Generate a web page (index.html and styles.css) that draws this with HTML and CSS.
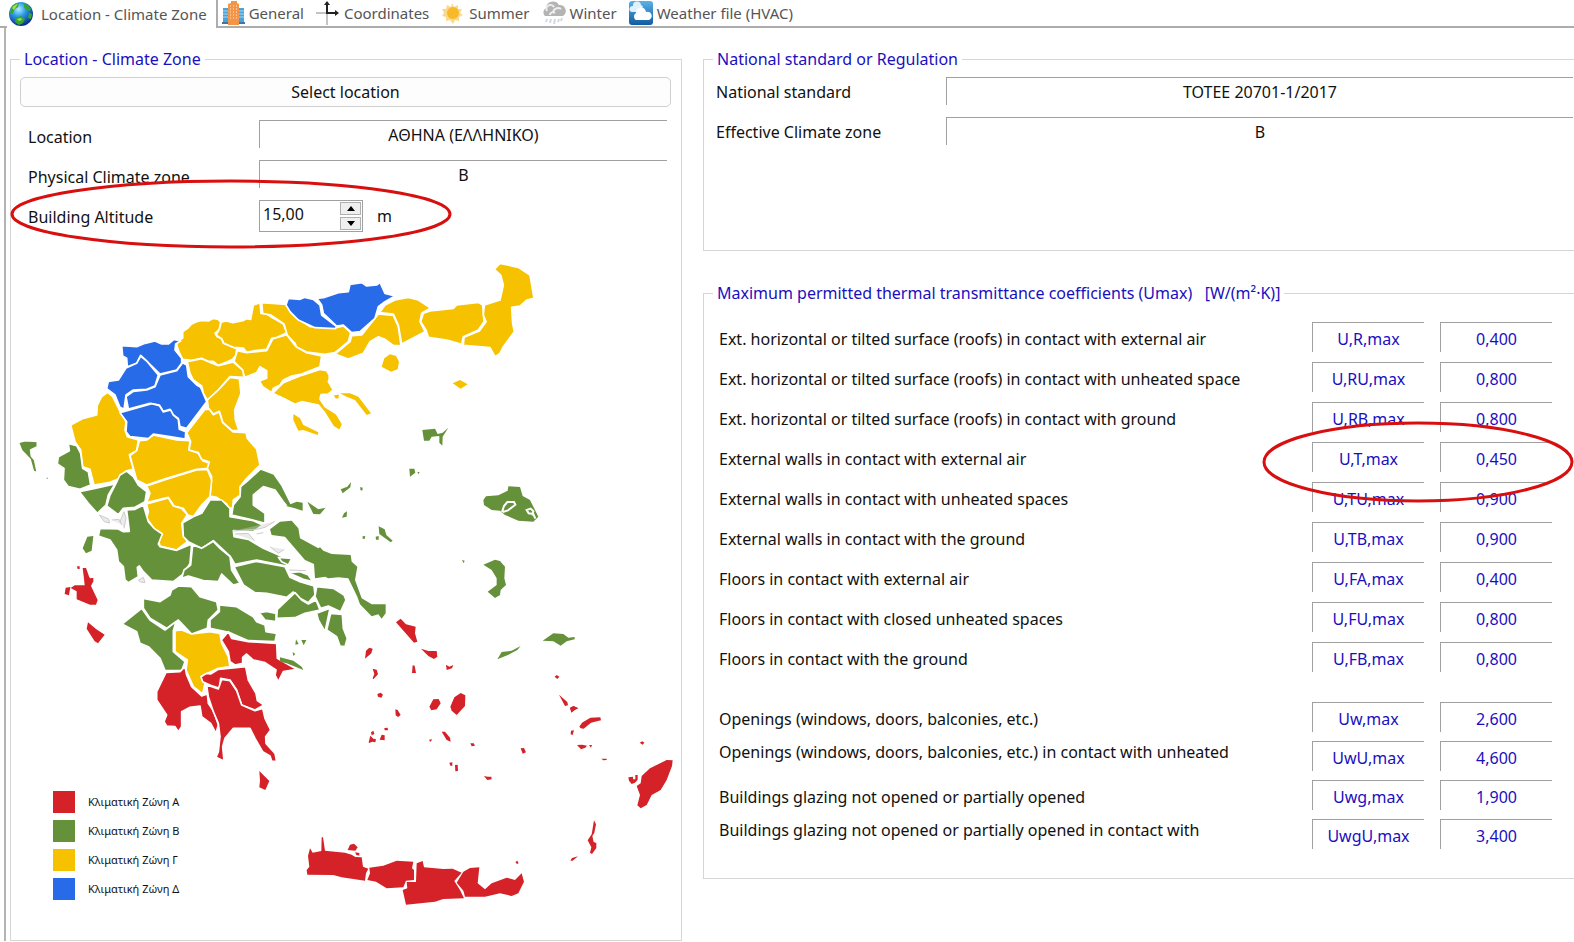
FILE: index.html
```html
<!DOCTYPE html>
<html lang="en">
<head>
<meta charset="utf-8">
<title>Location - Climate Zone</title>
<link rel="stylesheet" href="styles.css">
</head>
<body>
<nav class="tabs" role="tablist">
  <button class="tab tab-active" role="tab" aria-selected="true">
    <svg class="icon" viewBox="0 0 24 24"><defs><radialGradient id="sea" cx=".4" cy=".3" r=".75"><stop offset="0" stop-color="#b5ecff"/><stop offset=".4" stop-color="#2b9be6"/><stop offset="1" stop-color="#06207c"/></radialGradient></defs><circle cx="12" cy="12" r="12" fill="url(#sea)"/><path d="M2 6C4 2 7 1 10 1l-1 4-3 2-2 4-3 1zM15 2l4 1 3 4-1 2-4-1-2-3zM7 16l5-2 4 3-2 4-4 2-4-3zM20 11l3 1-1 5-3-1z" fill="#37a534"/><path d="M3 6c2-3 4-4 6-4l-2 3-2 3zM8 17l4-1 1 2-3 1z" fill="#9fdc57"/></svg>
    Location - Climate Zone</button>
  <button class="tab" role="tab">
    <svg class="icon" viewBox="0 0 24 24"><path d="M2 7h5v15H2zM18 7h5v15h-5z" fill="#4ba3d8"/><path d="M2 10h5M2 13h5M2 16h5M18 10h5M18 13h5M18 16h5" stroke="#a5d7f1"/><path d="M7 3l3-1V0h6v2l2 1v21H7z" fill="#f39548"/><path d="M9.500 4v15M12.500 4v15M15.500 4v15" stroke="#f9c08d" stroke-dasharray="2 1"/><path d="M1 21h6v2H1zM18 21h6v2h-6z" fill="#3478ad"/></svg>
    General</button>
  <button class="tab" role="tab">
    <svg class="icon" viewBox="0 0 24 24"><path d="M0 12h11M11 12v12" stroke="#c4c4c4" stroke-width="2"/><path d="M11 2v10h10" fill="none" stroke="#222" stroke-width="2"/><path d="M8 4l3-4 3 4zM19 9l4 3-4 3z" fill="#222"/></svg>
    Coordinates</button>
  <button class="tab" role="tab">
    <svg class="icon" viewBox="0 0 24 24"><path d="M11 2l2 4 4-2 0 4 4 0-2 4 3 2-4 2 0 4-4-1-2 4-3-4-4 1 0-4-4-1 2-3-2-4 4 0 1-4 4 2z" fill="#fbd98b"/><circle cx="12" cy="12" r="6" fill="#f8b928"/></svg>
    Summer</button>
  <button class="tab" role="tab">
    <svg class="icon" viewBox="0 0 24 24"><path d="M3 15a5 5 0 0 1 1-8 7 7 0 0 1 13-3 6 6 0 0 1 4 11z" fill="#b4b4b4"/><path d="M5 10a4 4 0 0 1 7-4M11 12a5 5 0 0 1 8-4M8 14a3 3 0 0 1 5-2" fill="none" stroke="#eee" stroke-width="2"/><path d="M5 18l-1 3M9 18l-1 4M13 18l-1 5M17 18l-1 3M20 17l-1 3" stroke="#d0d8e2" stroke-width="2"/></svg>
    Winter</button>
  <button class="tab" role="tab">
    <svg class="icon" viewBox="0 0 24 24"><defs><linearGradient id="sky" x2="0" y2="1"><stop offset="0" stop-color="#5ab2e8"/><stop offset="1" stop-color="#115a9f"/></linearGradient></defs><rect width="24" height="24" rx="3" fill="url(#sky)"/><path d="M3 11a3 3 0 0 1 1-6 4 4 0 0 1 8-1 3 3 0 0 1 2 2l-5 5z" fill="#dff1fc"/><path d="M7 19a4 4 0 0 1 0-7 5 5 0 0 1 10-1 4 4 0 0 1 3 8z" fill="#fff"/></svg>
    Weather file (HVAC)</button>
</nav>

<main class="page">
  <fieldset class="group">
    <legend>Location - Climate Zone</legend>
    <div class="location">
      <button class="select-button">Select location</button>
      <div class="form">
        <label for="loc">Location</label><input class="field" id="loc" readonly value="ΑΘΗΝΑ (ΕΛΛΗΝΙΚΟ)">
        <label for="pcz">Physical Climate zone</label><input class="field" id="pcz" readonly value="Β">
        <label for="alt">Building Altitude</label>
        <div class="altitude">
          <span class="spin"><input id="alt" value="15,00"><span class="arrows"><button aria-label="Increase"><svg viewBox="0 0 8 5"><path d="M0 5l4-5 4 5z"/></svg></button><button aria-label="Decrease"><svg viewBox="0 0 8 5"><path d="M0 0l4 5 4-5z"/></svg></button></span></span>
          <span>m</span>
        </div>
        <svg class="mark mark-altitude" viewBox="0 0 442 70"><ellipse cx="221" cy="35" rx="219" ry="33"/></svg>
      </div>
    </div>
    <div class="map-area">
      <svg class="map" viewBox="33 750 2010 2055" role="img" aria-label="Climate zones of Greece">
        <g class="region" transform="translate(0 750)">
          <g class="zone-c">
            <path d="M530 285L535 272 548 264 548 245 562 236 575 222 590 215 605 211 625 213 640 205 655 208 662 216 658 238 645 250 652 260 665 266 670 280 690 288 710 296 708 315 698 328 680 336 655 346 640 334 625 334 605 325 575 331 548 328 538 308Z"/>
            <path d="M664 216L680 213 698 218 728 212 740 206 752 208 760 165 780 158 783 190 800 192 812 200 830 210 850 222 860 248 832 262 815 265 800 298 765 302 740 307 730 294 700 292 672 280 665 266 648 255 658 238Z"/>
            <path d="M785 158L860 163 870 185 890 205 930 230 1005 234 1030 228 1052 248 1045 275 1005 308 975 313 920 306 890 292 885 280 862 256 852 222 830 207 812 195 788 190Z"/>
            <path d="M712 302L740 308 800 302 818 267 860 254 888 290 920 308 965 318 960 350 905 372 875 378 850 390 840 405 820 415 815 428 788 410 778 393 800 385 800 362 780 350 770 368 735 382 725 358 702 334Z"/>
            <path d="M818 430L850 398 905 376 960 358 980 362 990 380 985 395 1000 420 985 432 963 434 960 447 975 470 1010 492 1028 522 1020 542 1000 530 975 490 955 465 905 455 885 463 850 445Z"/>
            <path d="M562 335L605 326 625 335 655 347 700 336 728 360 732 382 690 380 655 420 622 450 610 430 605 408 580 390 570 370Z"/>
            <path d="M690 382L718 386 723 430 704 480 706 510 717 542 695 542 668 516 658 484 640 492 625 475 622 450 655 420Z"/>
            <path d="M212 525L250 505 290 495 292 465 305 440 323 427 338 440 358 480 378 515 375 540 382 560 415 570 410 602 388 614 400 657 378 663 360 685 330 697 282 705 270 658 248 650 242 600 225 575Z"/>
            <path d="M418 572L440 570 460 555 530 570 570 572 567 600 595 610 608 632 628 640 625 655 590 658 500 685 440 705 410 690 390 617 410 602Z"/>
            <path d="M560 548L615 478 628 478 640 494 658 486 668 518 700 546 738 548 742 565 770 597 780 645 740 685 720 710 722 735 700 750 698 772 688 778 680 762 650 742 630 738 635 680 622 655 628 636 605 628 595 608 567 600 572 575Z"/>
            <path d="M440 708L500 688 590 660 622 658 635 690 630 740 605 765 580 800 563 795 550 775 522 768 505 742 440 758 450 730Z"/>
            <path d="M440 762L505 744 520 768 545 775 562 794 545 820 550 855 562 875 530 900 480 888 475 868 487 852 462 835 440 805 445 785Z"/>
          </g>
          <g class="zone-d">
            <path d="M365 287L410 290 435 280 465 273 485 282 505 282 522 268 542 273 527 282 525 300 545 325 545 340 530 360 480 372 440 333 422 316 410 340 382 350 380 325 368 318Z"/>
            <path d="M378 354L410 340 422 318 440 333 475 375 465 408 440 418 400 420 378 435 372 478 360 472 345 435 320 416 325 394 355 390Z"/>
            <path d="M480 375L530 362 548 338 560 345 565 380 590 405 602 412 620 455 560 535 540 530 535 505 515 492 510 478 490 484 478 465 450 460 385 477 378 440 400 424 440 420 465 410Z"/>
            <path d="M360 488L400 477 455 461 478 467 490 486 512 480 520 495 535 508 538 538 557 545 556 567 500 558 460 552 445 566 390 560 378 545 380 515Z"/>
          </g>
          <g class="zone-b">
            <path d="M205 580L230 587 242 610 248 655 265 665 272 705 240 718 205 710 190 690 192 655 172 642 175 620 208 602Z"/>
            <path d="M55 577L75 572 112 574 112 590 92 600 94 618 104 630 112 668 100 664 90 628 65 602ZM133 680l12 1 2 8-8-1zM987 381l16 0 0 3-14 1z"/>
          </g>
        </g>
        <g class="region" transform="translate(0 1410)">
          <g class="zone-b">
            <path d="M238 65L285 55 345 42 325 75 318 105 292 130 265 100Z"/>
            <path d="M348 40L360 15 380 3 400 20 415 45 440 65 435 95 405 112 370 115 355 134 320 108 330 75Z"/>
            <path d="M380 120L405 118 430 105 445 155 462 175 487 192 475 222 480 230 530 241 575 222 570 280 550 312 520 335 455 330 430 305 418 288 412 292 415 320 385 338 375 330 370 290 355 275 350 240 330 210 295 198 300 175 355 177 370 185 388 184Z"/>
            <path d="M548 158L580 140 605 130 630 90 665 90 690 115 690 140 760 152 788 165 760 185 700 182 702 200 745 208 790 235 870 270 860 288 770 270 705 283 690 258 640 212 605 235 565 215 550 200Z"/>
            <path d="M578 225L605 235 640 214 660 235 690 260 695 300 720 340 700 345 665 312 655 335 610 332 565 318 545 325 552 300 572 285Z"/>
            <path d="M702 290L770 274 855 290 870 322 900 335 942 348 945 375 925 398 900 385 880 366 860 382 800 370 765 368 730 345Z"/>
            <path d="M866 308L900 305 925 315 938 335 910 328ZM835 262L875 265 865 285 845 275Z"/>
            <path d="M832 418L862 390 885 368 905 390 925 402 948 390 960 420 915 430 885 443 830 445ZM778 428L800 424 828 430 828 455 795 450Z"/>
            <path d="M950 350L1000 355 1032 375 1038 390 1022 425 985 408 962 415 945 380Z"/>
            <path d="M950 430L990 415 975 485 955 450ZM992 430L1027 433 1030 475 1042 505 1035 530 1020 528 1010 500 980 480Z"/>
            <path d="M782-3L822 12 845 45 875 105 865 113 850 95 825 60 790 50 760 75 760 105 795 130 795 160 750 148 695 135 700 105 720 80 722 50 740 35Z"/>
            <path d="M430 385L480 395 510 375 515 360 535 348 575 350 600 380 650 395 655 420 625 450 622 475 575 492 535 450 500 475 450 445 430 415Z"/>
            <path d="M366 462L425 415 450 450 495 480 528 455 520 482 520 545 555 575 545 602 495 602 480 565 445 530 420 520 410 485Z"/>
            <path d="M658 405L710 410 760 440 770 455 795 465 798 485 830 490 825 515 745 512 690 488 630 475 630 450 658 425Z"/>
          </g>
          <g class="zone-c"><path d="M525 482L545 480 575 492 630 485 660 490 665 520 685 560 690 590 655 595 605 618 615 640 608 672 580 650 558 600 562 570 525 545Z"/></g>
          <g class="zone-a">
            <path d="M664 510L685 485 695 505 745 515 830 520 832 565 890 598 850 605 835 635 825 615 828 600 795 578 760 570 740 552 728 562 728 580 705 585 690 575 685 545Z"/>
            <path d="M603 620L620 610 632 612 655 598 737 590 745 630 768 670 772 692 792 705 765 720 725 705 710 660 690 630 662 625 658 655 630 645 608 635Z"/>
            <path d="M498 607L540 605 555 590 560 615 575 650 605 678 622 672 625 700 642 725 655 765 648 790 632 760 605 740 600 708 570 712 545 725 545 770 535 785 525 770 500 768 492 755 500 735 470 690 470 665Z"/>
            <path d="M620 645L655 657 665 628 690 632 710 662 725 705 765 722 788 715 795 745 812 780 797 800 798 820 825 850 830 875 815 873 810 858 788 845 765 805 750 775 700 775 675 805 668 830 672 873 648 862 655 845 660 800 655 760 640 725 625 680Z"/>
          </g>
        </g>
        <g class="zone-b" transform="translate(0 1410)"><path d="M262 200L280 198 275 242 258 250 248 235ZM888 508l8 14-10 2zM904 510l15 0-8 16zM878 546l8 6-6 6zM840 562L880 572 905 590 910 600 860 580 840 575Z"/></g>
        <g class="zone-a" transform="translate(0 1410)">
          <path d="M248 294l10 0 10 28 12 12-7 14 20 42-5 14-18 0-40-16 0-24-18-10 12-8 30 0-2-20zM197 353l14-2-4 25-13-4zM231 289l8 0 0 8-6 0zM272 324l8 0 0 12-6 0zM264 457l24 20 26 17-20 26-10-6-24-38zM778 903l30 30-12 27-18-8 2-20z"/>
        </g>
        <g class="shoals" transform="translate(0 1410)"><path d="M298 135l28 12 3 12-16-4zM335 150l22-2 8 16M360 155l12-30 6 20-6 30M700 183l40-3 35-3 20-5 30-18M705 192l40-2 18 22M810 230l25 20 18-12M415 330l15-8 5 16-14-2zM770 192l20-4M868 300l50 2"/></g>
        <g class="region" transform="translate(810 750)">
          <g class="zone-c">
            <path d="M195 312L240 275 245 257 275 255 325 192 370 196 385 230 393 287 370 286 345 268 325 260 300 275 280 310 235 327Z"/>
            <path d="M328 188L345 165 375 150 415 142 445 150 482 174 455 190 450 215 465 245 395 282 385 225 370 192Z"/>
            <path d="M460 190L480 183 550 175 560 165 625 157 638 165 642 215 625 240 580 260 575 283 530 270 475 262 468 240 452 215Z"/>
            <path d="M643 165L690 150 700 105 692 75 673 58 690 40 745 52 780 75 792 145 770 150 750 168 725 172 728 220 733 245 700 290 690 310 675 320 660 293 580 286 582 262 628 243 648 215 640 195Z"/>
          </g>
          <g class="zone-d">
            <path d="M48 165L55 145 90 148 105 142 130 148 150 165 155 195 200 230 195 236 135 233 85 210 60 185Z"/>
            <path d="M141 145L165 142 205 128 235 125 240 103 275 98 290 108 320 105 330 97 345 130 375 138 345 155 325 170 315 205 270 245 245 248 220 225 200 228 160 190 155 165Z"/>
          </g>
        </g>
        <g class="zone-c" transform="translate(810 750)"><path d="M335 350L343 325 360 313 378 318 387 335 383 358 363 365ZM548 400L570 390 593 403 572 416ZM210 430L240 430 265 440 280 460 303 490 290 495 255 450 230 440ZM192 436L207 434 205 446 196 445ZM70 492L90 505 100 525 145 547 143 555 100 540 85 542 70 510Z"/></g>
        <g class="zone-b" transform="translate(810 750)"><path d="M457 540L495 536 503 552 518 548 535 533 518 560 517 587 508 578 508 558 485 560 478 572 462 572ZM418 656L433 656 436 668 420 680ZM442 665l7 2-4 6z"/></g>
        <g class="zone-b" transform="translate(810 1410)">
          <path d="M0 178L30 155 65 152 85 175 90 205 145 235 150 232 160 242 185 252 242 255 245 275 262 290 255 330 275 385 305 403 347 403 347 430 335 446 325 433 305 439 270 403 262 380 235 325 205 322 175 325 165 320 135 325 132 282 105 270 45 200 5 195Z"/>
          <path d="M48 108L80 95 98 98 98 122 72 114ZM112 95L145 118 167 113 150 133 130 132ZM212 58L232 50 243 36 241 52 218 70ZM271 51l7 2-1 9-6-2zM216 143L222 130 231 124 230 140ZM326 169L344 178 349 195 368 212 362 217 328 192ZM317 200l9-2 0 11-8 0zM278 198l8 1-2 8-6-1zM576 270l8 2-3 8z"/>
          <path d="M640 90L648 79 685 76 713 62 715 49 750 51 758 78 780 90 805 140 790 155 745 152 705 135 690 122 665 120 642 105ZM640 284L675 269 690 273 705 290 703 325 708 345 692 360 690 375 675 384 653 365 680 345 680 325 665 300ZM818 512L850 490 880 492 895 503 914 501 914 508 890 514 872 527 850 514ZM682 568L695 546 725 542 752 528 742 540 712 556Z"/>
          <path class="bay" d="M698 126l16-5 22-17-4-8-20 0-10 12-6 18M786 136l4-12-8-8-12 4 6 10 14 2 6 14"/>
        </g>
        <g class="zone-a" transform="translate(810 1410)">
          <path d="M378 457L392 446 408 463 437 470 435 490 442 515 432 518ZM453 536L475 543 500 543 502 560 492 567 475 558ZM428 586l6 1 4 22-12 0zM528 584l10 6 12-5-4 10-16 5zM285 566L288 542 298 533 308 536 304 550ZM308 596l12 3 4 14-14 15-2-3 5-13zM322 672l10-4 7 6-5 9-10-3zM854 620l6-5 8 5-6 7zM867 674l25 22 2 10-9 2zM900 715l10-7 15 7-10 4-11 8z"/>
          <path d="M478 710L490 688 506 687 512 700 500 718 484 721ZM541 710L553 682 572 669 586 676 585 708 560 735 545 722Z"/>
        </g>
        <g class="zone-a" transform="translate(810 2040)">
          <path d="M376 88l7 2 9 15-8 6-7-5zM343 144l10-1 1 8-10 0zM303 157l7-5 3 10-8 4zM296 187l5-20 9 9 8 2-2 9-9-2-10 4zM329 179l6-15 9 2 0 15zM515 155l10 0 15 18 2 12-12-5zM477 179l10-1-6 8zM601 190l10 0 4 7-10 2zM752 205l10-1 6 13-10 4zM538 248l9-1 0 10-6 0zM555 255l8-1 1 19-8 1zM642 288l11 2 11 0 1 8-13 2zM928 140l8-12 25-15 30-1 2 9-30 7-22 18-9-1zM903 152l9-1-4 14-6-2zM921 195l15-1 15 3-5 6-13 5zM957 195l9 0-3 8zM901 82l10-3 13 5-10 6-10 8zM994 236l16 0 0 4-10 1zM1109 188l8-4 6 4-5 6z"/>
          <path d="M1100 318L1112 310 1115 288 1140 265 1190 240 1208 241 1206 258 1190 300 1172 330 1145 345 1130 375 1112 385 1102 376 1110 345ZM1075 292l14-2 0 8 7 0 0-13 7 0 0 14-8 9-10 4-8-10zM972 421l6 12-5 25-6 10 4 18 8 3 0 15-13 18-6-4 4-16-11-21 12-18zM901 542l5-8 18-5-16 13zM736 546l6-4 4 8-5 2z"/>
          <path d="M120 505L128 518 154 513 155 472 159 472 165 512 225 518 245 524 256 531 275 532 279 560 295 566 288 580 285 602 215 592 190 585 112 584 110 570 118 560 114 528ZM233 510L240 494 252 491 263 502 256 512ZM256 517l12 2 0 8-10-3z"/>
          <path d="M298 563L340 557 380 542 430 545 426 565 432 570 432 600 408 602 400 622 350 625 318 605 292 600 300 580Z"/>
          <path d="M440 550L458 543 462 562 520 567 548 566 575 578 553 603 570 630 582 655 520 657 495 665 408 674 398 630 412 625 410 606 438 606Z"/>
          <path d="M580 575L600 564 628 562 623 610 645 628 665 610 710 593 735 600 755 580 762 605 745 640 725 648 690 640 645 650 585 650 580 632 560 608Z"/>
        </g>
      </svg>
      <ul class="map-legend">
        <li><i class="swatch swatch-a"></i>Κλιματική Ζώνη Α</li>
        <li><i class="swatch swatch-b"></i>Κλιματική Ζώνη Β</li>
        <li><i class="swatch swatch-c"></i>Κλιματική Ζώνη Γ</li>
        <li><i class="swatch swatch-d"></i>Κλιματική Ζώνη Δ</li>
      </ul>
    </div>
  </fieldset>

  <div class="column">
    <fieldset class="group group-open group-standard">
      <legend>National standard or Regulation</legend>
      <div class="standard">
        <label for="std">National standard</label><input class="field" id="std" readonly value="TOTEE 20701-1/2017">
        <label for="ecz">Effective Climate zone</label><input class="field" id="ecz" readonly value="Β">
      </div>
    </fieldset>
    <fieldset class="group group-open">
      <legend>Maximum permitted thermal transmittance coefficients (Umax) &nbsp; [W/(m²·K)]</legend>
      <div class="coefficients">
        <table>
          <tbody>
            <tr><th scope="row">Ext. horizontal or tilted surface (roofs) in contact with external air</th><td><span class="cell">U,R,max</span></td><td><span class="cell">0,400</span></td></tr>
            <tr><th scope="row">Ext. horizontal or tilted surface (roofs) in contact with unheated space</th><td><span class="cell">U,RU,max</span></td><td><span class="cell">0,800</span></td></tr>
            <tr><th scope="row">Ext. horizontal or tilted surface (roofs) in contact with ground</th><td><span class="cell">U,RB,max</span></td><td><span class="cell">0,800</span></td></tr>
            <tr><th scope="row">External walls in contact with external air</th><td><span class="cell">U,T,max</span></td><td><span class="cell">0,450</span></td></tr>
            <tr><th scope="row">External walls in contact with unheated spaces</th><td><span class="cell">U,TU,max</span></td><td><span class="cell">0,900</span></td></tr>
            <tr><th scope="row">External walls in contact with the ground</th><td><span class="cell">U,TB,max</span></td><td><span class="cell">0,900</span></td></tr>
            <tr><th scope="row">Floors in contact with external air</th><td><span class="cell">U,FA,max</span></td><td><span class="cell">0,400</span></td></tr>
            <tr><th scope="row">Floors in contact with closed unheated spaces</th><td><span class="cell">U,FU,max</span></td><td><span class="cell">0,800</span></td></tr>
            <tr><th scope="row">Floors in contact with the ground</th><td><span class="cell">U,FB,max</span></td><td><span class="cell">0,800</span></td></tr>
          </tbody>
          <tbody class="openings">
            <tr><th scope="row">Openings (windows, doors, balconies, etc.)</th><td><span class="cell">Uw,max</span></td><td><span class="cell">2,600</span></td></tr>
            <tr class="raised"><th scope="row">Openings (windows, doors, balconies, etc.) in contact with unheated</th><td><span class="cell">UwU,max</span></td><td><span class="cell">4,600</span></td></tr>
            <tr><th scope="row">Buildings glazing not opened or partially opened</th><td><span class="cell">Uwg,max</span></td><td><span class="cell">1,900</span></td></tr>
            <tr class="raised"><th scope="row">Buildings glazing not opened or partially opened in contact with</th><td><span class="cell">UwgU,max</span></td><td><span class="cell">3,400</span></td></tr>
          </tbody>
        </table>
        <svg class="mark mark-walls" viewBox="0 0 312 82"><ellipse cx="156" cy="41" rx="154" ry="39"/></svg>
      </div>
    </fieldset>
  </div>
</main>
</body>
</html>
```
FILE: styles.css
```css
* { box-sizing: border-box; }

body {
  margin: 0;
  background: #fff;
  color: #111;
  font: 16px/22px "Noto Sans", "Open Sans", sans-serif;
  overflow-x: hidden;
}

button, input { font: inherit; color: inherit; }

/* Tab strip */
.tabs {
  display: flex;
  height: 28px;
  padding-left: 7px;
  border-bottom: 2px solid #adadad;
  font-size: 15px;
}
.tab {
  display: flex;
  align-items: center;
  gap: 4px;
  padding: 0 9px 0 3px;
  border: 0;
  background: none;
  color: #555;
  white-space: nowrap;
}
.tab-active {
  gap: 8px;
  height: 28px;
  padding: 0 9px 0 2px;
  border-right: 2px solid #adadad;
  background: #fff;
}
.icon { width: 24px; height: 24px; flex: none; }

/* Page frame */
.page {
  display: grid;
  grid-template-columns: 672fr 871fr;
  gap: 21px;
  align-items: start;
  margin-left: 4px;
  padding: 20px 0 0 4px;
  border-left: 2px solid #b4b4b4;
}
.column { display: grid; gap: 31px; min-width: 0; }

.group {
  min-width: 0;
  margin: 0;
  padding: 0;
  border: 1px solid #d6d6d6;
}
.group-open { border-right: 0; }
.group-standard { min-height: 203px; }
legend {
  margin-left: 9px;
  padding: 0 4px;
  color: #1a0fc0;
}

.field {
  width: 100%;
  height: 28px;
  padding: 0;
  border: 0 solid #a0a0a0;
  border-width: 1px 0 0 1px;
  background: #fff;
  text-align: center;
}

/* Location group */
.location { padding: 7px 10px 0 9px; }
.select-button {
  display: block;
  width: 100%;
  height: 30px;
  padding: 0;
  border: 1px solid #d0d0d0;
  border-radius: 5px;
  background: #fdfdfd;
}
.form {
  position: relative;
  display: grid;
  grid-template-columns: 231px 1fr;
  grid-auto-rows: 32px;
  gap: 8px 0;
  align-items: start;
  padding: 13px 4px 0 8px;
}
.form label { line-height: 34px; }
.altitude { display: flex; align-items: center; gap: 14px; }
.spin {
  display: flex;
  width: 104px;
  height: 32px;
  padding: 1px;
  border: 1px solid #a0a0a0;
}
.spin input {
  flex: 1;
  min-width: 0;
  height: 24px;
  padding: 0 2px;
  border: 0;
}
.arrows { display: grid; gap: 2px; width: 21px; }
.arrows button {
  display: grid;
  place-items: center;
  padding: 0;
  border: 1px solid #b0b0b0;
  background: #efefef;
}
.arrows svg { width: 8px; height: 5px; }

.mark {
  position: absolute;
  fill: none;
  stroke: #d90f0f;
  stroke-width: 3;
  pointer-events: none;
}
.mark-altitude { left: -10px; bottom: -17px; width: 442px; height: 70px; }

/* Map */
.map-area { position: relative; padding: 18px 0 5px; }
.map { display: block; width: 100%; }
.region path { stroke: #fff; stroke-width: 5; stroke-linejoin: round; }
.zone-a { fill: #d42228; }
.zone-b { fill: #66913b; }
.zone-c { fill: #f6c200; }
.zone-d { fill: #276be8; }
.bay { fill: none; stroke: #fff; stroke-width: 6; }
.shoals { fill: #ccc; fill-opacity: .4; stroke: #ccc; stroke-width: 3; }
.map-legend {
  position: absolute;
  left: 42px;
  bottom: 40px;
  display: grid;
  gap: 7px;
  margin: 0;
  padding: 0;
  list-style: none;
  font-size: 11px;
}
.map-legend li { display: flex; align-items: center; gap: 13px; }
.swatch { width: 22px; height: 22px; }
.swatch-a { background: #d42228; }
.swatch-b { background: #66913b; }
.swatch-c { background: #f6c200; }
.swatch-d { background: #276be8; }

/* Standard group */
.standard {
  display: grid;
  grid-template-columns: 230px 1fr;
  gap: 10px 0;
  padding: 7px 1px 0 12px;
}
.standard label { line-height: 30px; }

/* Coefficients */
.coefficients { position: relative; padding: 18px 22px 20px 15px; }
table { width: 100%; border-collapse: collapse; }
tr { height: 40px; }
th {
  padding: 0;
  font-weight: 400;
  text-align: left;
  vertical-align: top;
  line-height: 34px;
  white-space: nowrap;
}
td { width: 128px; padding: 0; vertical-align: top; }
td + td { width: 112px; }
.cell {
  display: block;
  width: 112px;
  height: 30px;
  border: 0 solid #a0a0a0;
  border-width: 1px 0 0 1px;
  color: #1a0fc0;
  line-height: 32px;
  text-align: center;
}
.openings::before { content: ""; display: block; height: 20px; }
.openings tr { height: 39px; }
.raised th { line-height: 22px; }
.mark-walls { right: 0; top: 117px; width: 312px; height: 82px; }
```
